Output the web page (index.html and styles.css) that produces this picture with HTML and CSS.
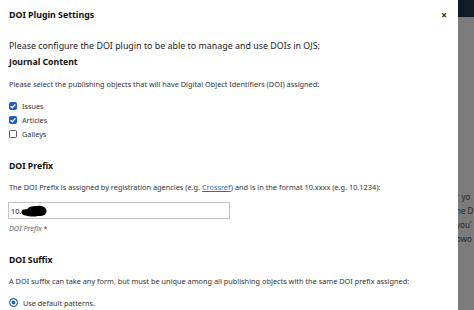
FILE: index.html
```html
<!DOCTYPE html>
<html>
<head>
<meta charset="utf-8">
<link rel="stylesheet" href="styles.css">
</head>
<body>
<div class="page">
  <div class="modal">
    <div class="header">
      <div class="title">DOI Plugin Settings</div>
      <div class="close">×</div>
    </div>
    <p class="intro">Please configure the DOI plugin to be able to manage and use DOIs in OJS:</p>
    <div class="section-title first">Journal Content</div>
    <p class="desc">Please select the publishing objects that will have Digital Object Identifiers (DOI) assigned:</p>
    <div class="checks">
      <label class="check"><span class="box on"><svg viewBox="0 0 8 8" width="8" height="8"><path d="M1.6 4.1 L3.3 5.8 L6.4 2.4" fill="none" stroke="#fff" stroke-width="1.3"/></svg></span>Issues</label>
      <label class="check"><span class="box on"><svg viewBox="0 0 8 8" width="8" height="8"><path d="M1.6 4.1 L3.3 5.8 L6.4 2.4" fill="none" stroke="#fff" stroke-width="1.3"/></svg></span>Articles</label>
      <label class="check"><span class="box"></span>Galleys</label>
    </div>
    <div class="section-title">DOI Prefix</div>
    <p class="desc">The DOI Prefix is assigned by registration agencies (e.g. <a class="link">Crossref</a>) and is in the format 10.xxxx (e.g. 10.1234):</p>
    <div class="input"><span class="val">10.</span><svg class="blob" viewBox="0 0 26 12" width="26" height="12"><path d="M0.5 7 C0.5 4.5 3 4 6 4.2 C8 1.5 12 0.5 16 1 C20 0.3 25 2 25.5 5.5 C26 9.5 22 11.5 17 11 C13 12 8 11.6 5 10.6 C2 10.5 0.5 9 0.5 7 Z" fill="#000"/></svg></div>
    <div class="hint">DOI Prefix <span class="req">*</span></div>
    <div class="section-title suffix">DOI Suffix</div>
    <p class="desc">A DOI suffix can take any form, but must be unique among all publishing objects with the same DOI prefix assigned:</p>
    <label class="radio"><span class="dot"></span>Use default patterns.</label>
  </div>
  <div class="backdrop">
    <div class="topbar"></div>
    <div class="bg-lines">
      <div>r yo</div>
      <div>ne D</div>
      <div>you'</div>
      <div>owo</div>
    </div>
  </div>
</div>
</body>
</html>
```
FILE: styles.css
```css
* { box-sizing: border-box; }
html, body { margin: 0; padding: 0; }
body {
  width: 474px;
  height: 310px;
  overflow: hidden;
  font-family: "Noto Sans", "Open Sans", sans-serif;
  color: #222;
  background: #fff;
}
.page { display: flex; height: 310px; }
.modal {
  width: 458px;
  flex: none;
  background: #fff;
  padding: 8px 0 0 9px;
  display: flex;
  flex-direction: column;
}
.header {
  display: flex;
  justify-content: space-between;
  align-items: center;
  height: 14px;
  padding-right: 11px;
}
.title { font-size: 8.8px; font-weight: 700; color: #111; line-height: 14px; }
.close { font-size: 10px; color: #222; line-height: 14px; font-weight: 700; }
.intro { margin: 17px 0 0; font-size: 8.9px; line-height: 14px; color: #222; }
.section-title { font-size: 8.7px; font-weight: 700; color: #111; margin-top: 19px; line-height: 12px; }
.section-title.first { margin-top: 3px; }
.section-title.suffix { margin-top: 20.6px; }
.desc { margin: 9.5px 0 0; font-size: 7.35px; line-height: 12px; color: #333; white-space: nowrap; }
.section-title.first + .desc { margin-top: 10px; }
.checks { display: flex; flex-direction: column; margin-top: 8.5px; }
.check { display: flex; align-items: center; font-size: 7.3px; height: 14px; color: #333; }
.box {
  width: 8px; height: 8px; border: 1px solid #555; border-radius: 1.5px;
  margin-right: 5px; display: flex; align-items: center; justify-content: center; background: #fff;
}
.box.on { background: #1d5ec4; border-color: #1d5ec4; }
.box svg { display: block; flex: none; }
.link { color: #2a6bbf; text-decoration: underline; }
.input {
  margin-top: 9.3px;
  width: 222px;
  height: 17px;
  border: 1px solid #c4c4c4;
  margin-left: -1px;
  display: flex;
  align-items: center;
  padding-left: 2px;
  font-size: 7.3px;
  color: #111;
}
.blob { display: block; margin-left: 0; }
.hint { font-size: 7.3px; font-style: italic; color: #666; margin-top: 3.7px; line-height: 10px; }
.req { color: #b0223a; font-style: normal; }
.radio { display: flex; align-items: center; font-size: 7.3px; color: #333; margin-top: 9.7px; height: 12px; }
.dot {
  width: 9px; height: 9px; border-radius: 50%;
  border: 1.5px solid #1d5ec4; background: #1d5ec4;
  margin-right: 5px; box-shadow: inset 0 0 0 1.6px #fff;
  flex: none;
}
.backdrop { flex: 1; background: #7b7b7b; display: flex; flex-direction: column; overflow: hidden; }
.topbar { height: 17px; background: #0d1b27; }
.bg-lines {
  margin-top: 173px;
  font-size: 8px;
  line-height: 14px;
  color: #262626;
  white-space: nowrap;
  margin-left: -2px;
}
```
